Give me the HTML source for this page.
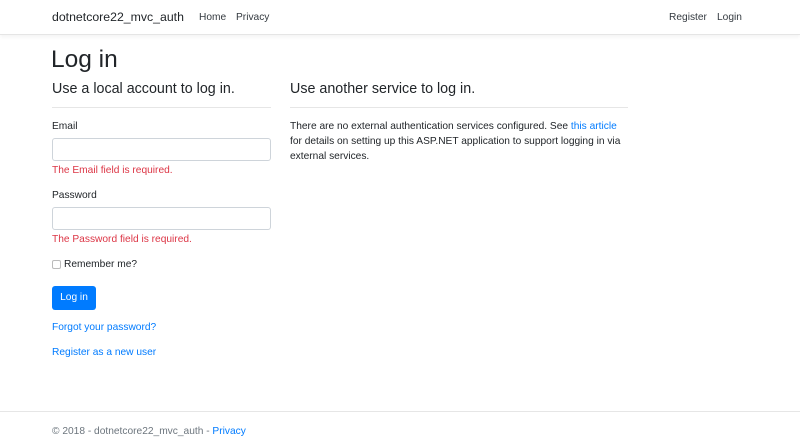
<!DOCTYPE html>
<html><head><meta charset="utf-8"><style>
*{box-sizing:border-box;margin:0;padding:0}
body{width:800px;height:447px;overflow:hidden;background:#fff;font-family:"Liberation Sans",Arial,sans-serif;color:#212529;position:relative;font-size:10.2px}
.a{position:absolute;white-space:nowrap}
nav{position:absolute;left:0;top:0;width:800px;height:35px;border-bottom:1px solid #e5e5e5;box-shadow:0 2px 4px rgba(0,0,0,.05)}
.blue{color:#007bff}
.red{color:#dc3545}
.inp{position:absolute;left:52px;width:219px;height:23px;border:1px solid #ced4da;border-radius:3px}
hr{position:absolute;border:0;border-top:1px solid #e6e6e6;height:0}
</style></head><body>
<nav>
<div class="a" style="left:52px;top:10px;font-size:12.3px;color:#212529">dotnetcore22_mvc_auth</div>
<div class="a" style="left:199px;top:12px;color:#343a40">Home</div>
<div class="a" style="left:236px;top:12px;color:#343a40">Privacy</div>
<div class="a" style="left:669px;top:12px;color:#343a40">Register</div>
<div class="a" style="left:717px;top:12px;color:#343a40">Login</div>
</nav>
<div class="a" style="left:51px;top:46px;font-size:24.5px">Log in</div>
<div class="a" style="left:52px;top:81px;font-size:14.3px">Use a local account to log in.</div>
<hr style="left:52px;top:107px;width:219px">
<div class="a" style="left:52px;top:121px">Email</div>
<div class="inp" style="top:138px"></div>
<div class="a red" style="left:52px;top:165px">The Email field is required.</div>
<div class="a" style="left:52px;top:190px">Password</div>
<div class="inp" style="top:207px"></div>
<div class="a red" style="left:52px;top:234px">The Password field is required.</div>
<div class="a" style="left:52px;top:260px;width:9px;height:9px;border:1px solid #bbb;border-radius:2px"></div>
<div class="a" style="left:64px;top:259px">Remember me?</div>
<div class="a" style="left:52px;top:286px;width:44px;height:24px;background:#007bff;border-radius:3px;color:#fff;text-align:center;line-height:24px">Log in</div>
<div class="a blue" style="left:52px;top:322px">Forgot your password?</div>
<div class="a blue" style="left:52px;top:347px">Register as a new user</div>
<div class="a" style="left:290px;top:81px;font-size:14.3px">Use another service to log in.</div>
<hr style="left:290px;top:107px;width:338px">
<div class="a" style="left:290px;top:119px;line-height:15px;white-space:normal;width:332px">There are no external authentication services configured. See <span class="blue">this article</span> for details on setting up this ASP.NET application to support logging in via external services.</div>
<hr style="left:0;top:411px;width:800px">
<div class="a" style="left:52px;top:426px;color:#6c757d">© 2018 - dotnetcore22_mvc_auth - <span class="blue">Privacy</span></div>
</body></html>
